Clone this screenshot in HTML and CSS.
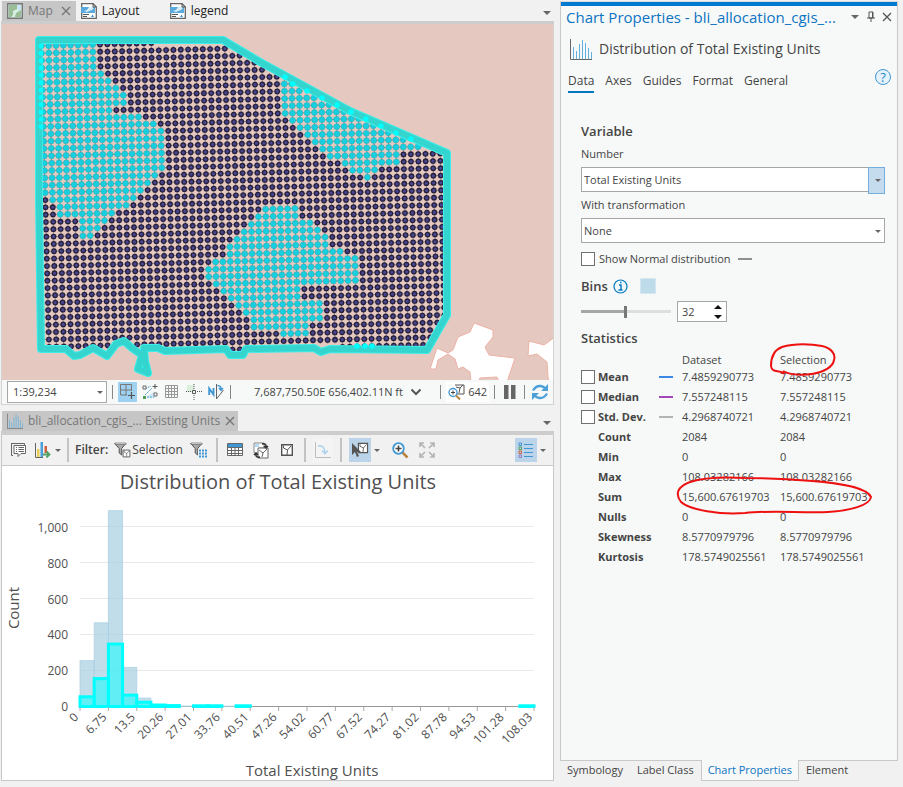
FILE: index.html
```html
<!DOCTYPE html>
<html lang="en">
<head>
<meta charset="utf-8">
<title>Chart Properties</title>
<link rel="stylesheet" href="styles.css">
</head>
<body>
<svg class="defs" width="0" height="0" aria-hidden="true">
  <defs>
    <symbol id="i-layout" viewBox="0 0 16 16"><path d="M.7.7H12l3.3 3.3v11.300H.7z" fill="#fff" stroke="#666" stroke-width="1.300"/><path d="M0 4h14v6H0z" fill="#5aa9dc"/><path d="M3 8l3-1 2-3 3 0 2 1-2 2-3 1-2 1z" fill="#d9edf8"/><path d="M12 .5v3.500h3.500M2 11.500h6M2 13.500h4" stroke="#555" fill="none"/><path d="M10 14l1.500-2.500L13 14z" fill="#3f97d3"/></symbol>
    <symbol id="i-hist" viewBox="0 0 22 22"><path d="M3.500 9v12M6.500 13v8M9.500 6v15M12.500 2v19M15.500 5v16M18.500 10v11M21.500 14v7" stroke="#62b0e0" fill="none"/><path d="M.5 1v20.500H22" stroke="#666" fill="none"/></symbol>
    <symbol id="i-funnel" viewBox="0 0 16 16"><path d="M.7 1.500h11l-4 5v6.500l-2.500-2V6.500z" fill="#aaa" stroke="#555"/><path d="M1 1h11v1.500H1z" fill="#eee" stroke="#555" stroke-width=".6"/></symbol>
    <symbol id="i-poly" viewBox="0 0 14 14"><path d="M1.700 1.700h10.600v10.600H1.700z" fill="#fff" stroke="#555" stroke-width="1.400"/><path d="M3.500 2.500v2.500l4 2 3.500-4M7.500 7l-.5 5" fill="none" stroke="#555"/></symbol>
  </defs>
</svg>
<main class="app">
  <div class="left">
    <section class="view map-view">
      <nav class="tabs" aria-label="Views">
        <button class="tab active"><svg width="16" height="16" viewBox="0 0 16 16"><path d="M.7.7h14.600v14.600H.7z" fill="#d7efe2" stroke="#777" stroke-width="1.400"/><path d="M2 2h8v4l-4 2v4l-2 2H2z" fill="#98bd97"/><path d="M10 2h4v4l-3 2z" fill="#c8e4f4"/><path d="M9 10l5-3v7H8z" fill="#98bd97"/></svg>Map<span class="close" aria-label="Close"><svg width="10" height="10" viewBox="0 0 10 10"><path d="M1 1l8 8M9 1L1 9" stroke="#777" stroke-width="1.400"/></svg></span></button>
        <button class="tab"><svg width="16" height="16"><use href="#i-layout"/></svg>Layout</button>
        <button class="tab second"><svg width="16" height="16"><use href="#i-layout"/></svg>legend</button>
        <button class="more" aria-label="More views"><i class="caret big"></i></button>
      </nav>
      <svg class="map" viewBox="2 24 551 356" preserveAspectRatio="xMinYMin slice" role="img" aria-label="Map of selected points">
        <g class="blank"><path d="M474 323L493 330V337L485 347L489 355L515 358L507 382H499L497 377L480 378L478 382H471L470 372L463 367L458 369L455 359L448 354L438 360L436 369H430L437 348L448 353L453 350L458 337L470 332Z"/><path d="M529 341L544 345L555 337V382H549L548 377L547 362L537 354L528 356Z"/></g>
        <g id="dots"></g>
        <g fill="none" stroke-linejoin="round"><path class="rim" d="M39 40H223L262 63 350 111 447 153V315L427 350 330 349 321 352 314 348 246 349 243 355H230L226 349 165 351 158 348H144L145 361 148 373 138 369 142 355 133 349 124 341 116 344 107 356 93 348 80 355 74 356 66 349 41 349 39 200Z"/><path class="core" d="M39 40H223L262 63 350 111 447 153V315L427 350 330 349 321 352 314 348 246 349 243 355H230L226 349 165 351 158 348H144L145 361 148 373 138 369 142 355 133 349 124 341 116 344 107 356 93 348 80 355 74 356 66 349 41 349 39 200Z"/></g>
        <g id="bright" fill="#0ff"></g>
      </svg>
      <div class="status">
        <div class="drop scale"><select aria-label="Map scale"><option>1:39,234</option></select></div>
        <i class="bar"></i>
        <button class="tool on" aria-label="Constrain"><svg width="16" height="16" viewBox="0 0 16 16"><path d="M11.500 7V.5H.5v10.500H7M6 .5v10.500M.5 6h11" fill="none" stroke="#777"/><path d="M11.500 8v7M8 11.500h7" stroke="#555" stroke-width="1.200"/></svg></button>
        <button class="tool" aria-label="Dynamic constraints"><svg width="16" height="16" viewBox="0 0 16 16"><path d="M5 12L13 7v7H5z" fill="#d3ebf7"/><path d="M3 5l6-3M3 11l7-7M5 13h7" stroke="#4c9fd0" stroke-dasharray="2 1"/><path d="M1 2h3v3H1zM12 9h3v3h-3z" fill="#fff" stroke="#666"/><path d="M13 0v5M10.500 2.500h5" stroke="#555"/><path d="M1 12h3v3H1z" fill="#4d9d5c"/></svg></button>
        <button class="tool" aria-label="Grid"><svg width="16" height="16" viewBox="0 0 16 16"><path d="M1.500 1.500h12v12h-12zM4.500 1.500v12M7.500 1.500v12M10.500 1.500v12M1.500 4.500h12M1.500 7.500h12M1.500 10.500h12" fill="none" stroke="#999"/></svg></button>
        <button class="tool" aria-label="Snapping"><svg width="16" height="16" viewBox="0 0 16 16"><path d="M1 1h7v7H1z" fill="#dcefdc"/><path d="M8 0v5M8 11v5M0 7.500h5M11 7.500h5" stroke="#555" stroke-dasharray="1 1"/><path d="M6.500 6.500h3v3h-3z" fill="none" stroke="#555"/></svg></button>
        <button class="tool" aria-label="Correct to north"><svg width="16" height="16" viewBox="0 0 16 16"><path d="M1.200 11V4.500L5.500 10.500V4" fill="none" stroke="#3f97d3" stroke-width="1.900"/><path d="M8.500 0v15M8.500 15l7-9" stroke="#666" fill="none"/><path d="M9.500 1.500q4 .5 3.500 4M11 4l2 2.500 2-2.500" stroke="#3f97d3" stroke-width="1.400" fill="none"/></svg></button>
        <i class="bar"></i>
        <span class="coords">7,687,750.50E 656,402.11N ft</span>
        <button class="tool unit" aria-label="Units"><svg width="12" height="8" viewBox="0 0 12 8"><path d="M1.500 1.500L6 6l4.500-4.500" fill="none" stroke="#555" stroke-width="2"/></svg></button>
        <i class="bar push"></i>
        <button class="sel"><svg width="17" height="16" viewBox="0 0 17 16"><path d="M7 1h9v9H8" fill="#fff" stroke="#555"/><path d="M8 3l4 1 3-3M12 4l-1 5" fill="none" stroke="#555"/><circle cx="5" cy="8.500" r="4" fill="#fff" stroke="#3f97d3" stroke-width="1.300"/><path d="M5 6.500v4M3 8.500h4" stroke="#444"/><path d="M8 11.500l4 4" stroke="#b9853f" stroke-width="2"/></svg>642</button>
        <i class="bar"></i>
        <button class="tool" aria-label="Pause"><svg width="12" height="14" viewBox="0 0 12 14"><path d="M0 0h4.500v14H0zM7 0h4.500v14H7z" fill="#666"/></svg></button>
        <i class="bar"></i>
        <button class="tool" aria-label="Refresh"><svg width="18" height="16" viewBox="0 0 18 16"><path d="M2 6.500Q5 1.500 9.500 2q3 .3 5 2.500M16 9.500Q13 14.500 8.500 14q-3-.3-5-2.500" fill="none" stroke="#4ba0da" stroke-width="2.400"/><path d="M17 0v7h-7zM1 16V9h7z" fill="#4ba0da"/></svg></button>
      </div>
    </section>

    <section class="view chart-view">
      <nav class="tabs" aria-label="Charts">
        <button class="tab active"><svg width="16" height="16"><use href="#i-hist"/></svg>bli_allocation_cgis_... Existing Units<span class="close" aria-label="Close"><svg width="10" height="10" viewBox="0 0 10 10"><path d="M1 1l8 8M9 1L1 9" stroke="#777" stroke-width="1.400"/></svg></span></button>
        <button class="more" aria-label="More charts"><i class="caret big"></i></button>
      </nav>
      <div class="toolbar">
        <button class="tool" aria-label="Properties"><svg width="16" height="16" viewBox="0 0 16 16"><path d="M.5 1v12.500H2M.5 1.500h13V3" fill="none" stroke="#666"/><path d="M3 3.500h11.500v8H10l-3 3v-3H3z" fill="#fff" stroke="#666"/><path d="M5 5.500h1M7.500 5.500H13M5 7.500h1M7.500 7.500H13M5 9.500h1M7.500 9.500H13" stroke="#666"/></svg></button>
        <button class="tool wide" aria-label="Export"><svg width="16" height="16" viewBox="0 0 16 16"><path d="M.5 1v14.500H8" fill="none" stroke="#666"/><path d="M2 7h2.500v8H2z" fill="#e8cf54"/><path d="M5.500 0H8v15H5.500z" fill="#4ba0da"/><path d="M9.500 4H12v7H9.500z" fill="#d1603d"/><path d="M8 12.500h6M11.500 9.500l3 3-3 3" stroke="#53a063" stroke-width="1.800" fill="none"/></svg><i class="caret"></i></button>
        <i class="sep"></i>
        <span class="filter">Filter:</span>
        <button class="tool text"><svg width="17" height="17" viewBox="0 0 17 17"><use href="#i-funnel" width="16" height="16"/><use href="#i-poly" x="8" y="7" width="9" height="9"/></svg>Selection</button>
        <button class="tool" aria-label="Filter by extent"><svg width="18" height="17" viewBox="0 0 18 17"><use href="#i-funnel" width="16" height="16"/><path d="M8 7h9v9H8z" fill="#f1f1f1"/><path d="M9 8.500h8M9 11.500h8M9 14.500h8" stroke="#3f97d3" stroke-width="2" stroke-dasharray="2 1"/></svg></button>
        <i class="sep"></i>
        <button class="tool" aria-label="Attribute table"><svg width="16" height="14" viewBox="0 0 16 14"><path d="M.5.5h15v12H.5z" fill="#fff" stroke="#666"/><path d="M1 1h14v3H1z" fill="#3f97d3"/><path d="M1 4.500h14M1 7.500h14M1 10.500h14M4.500 4v9M8 4v9M11.500 4v9" stroke="#666"/></svg></button>
        <button class="tool" aria-label="Switch selection"><svg width="16" height="17" viewBox="0 0 16 17"><path d="M1 1h10v5H6v5H1z" fill="#fff" stroke="#888"/><path d="M2 2h4v3H2z" fill="#b5daf0"/><path d="M5 6h10v10H5z" fill="#fff" stroke="#666"/><path d="M6 8l4 3 4-4M9 15l1-4" fill="none" stroke="#666"/><path d="M9 2q5-1 4 4M11 4l2 2 2-2M7 15q-5 1-4-4M1 13l2-2 2 2" stroke="#333" stroke-width="1.500" fill="none"/></svg></button>
        <button class="tool" aria-label="Clear selection"><svg width="14" height="14"><use href="#i-poly"/></svg></button>
        <i class="sep"></i>
        <button class="tool pale" aria-label="Rotate"><svg width="16" height="16" viewBox="0 0 16 16"><path d="M.5 0v15.500H16" fill="none" stroke="#bbb"/><path d="M3 4q7-1 7 7M7 8.500l3 3 3-3" fill="none" stroke="#add3ec" stroke-width="1.600"/></svg></button>
        <i class="sep"></i>
        <button class="tool on" aria-label="Select"><svg width="18" height="16" viewBox="0 0 18 16"><use href="#i-poly" x="6" y="0" width="12" height="12"/><path d="M1 1v12l3-3 2 5 2-1-2-4h4z" fill="#555"/></svg></button><i class="caret"></i>
        <button class="tool zoom" aria-label="Zoom"><svg width="17" height="17" viewBox="0 0 17 17"><path d="M10.500 10.500l5 5" stroke="#b9853f" stroke-width="2.500"/><circle cx="6.500" cy="6.500" r="5.300" fill="#fff" stroke="#3f97d3" stroke-width="1.800"/><path d="M6.500 3.500v6M3.500 6.500h6" stroke="#444" stroke-width="1.600"/></svg></button>
        <button class="tool" aria-label="Full extent"><svg width="16" height="16" viewBox="0 0 16 16"><path d="M1 5V1h4M11 1h4v4M15 11v4h-4M5 15H1v-4M1 1l5 5M15 1l-5 5M15 15l-5-5M1 15l5-5" fill="none" stroke="#b5b5b5" stroke-width="1.700"/></svg></button>
        <button class="tool on push" aria-label="Legend"><svg width="16" height="16" viewBox="0 0 16 16"><path d="M6 2.500h9M6 6.500h9M6 10.500h9M6 14.500h9" stroke="#3f97d3"/><path d="M1 1h2.500v2.500H1z" fill="none" stroke="#3f97d3"/><path d="M1 5h2.500v2.500H1z" fill="none" stroke="#53a063"/><path d="M1 9h2.500v2.500H1z" fill="none" stroke="#d1603d"/><path d="M1 13h2.500v2.500H1z" fill="none" stroke="#9480c4"/></svg></button><i class="caret"></i>
      </div>
      <svg class="chart" viewBox="2 466 551 314" role="img" aria-label="Histogram of Total Existing Units">
        <text x="278" y="489" class="ctitle">Distribution of Total Existing Units</text>
        <g class="grid"><path d="M80 526.500h454M80 562.500h454M80 598.500h454M80 634.500h454M80 670.500h454"/></g>
        <g class="ylab"><text x="68" y="532">1,000</text><text x="68" y="568">800</text><text x="68" y="604">600</text><text x="68" y="639">400</text><text x="68" y="675">200</text><text x="68" y="711">0</text></g>
        <path class="axis" d="M80 706.500h454"/>
        <g id="all" class="bars"></g>
        <g id="chosen" class="bars picked"></g>
        <g id="ticks" class="xlab"></g>
        <text x="312" y="776" class="cname">Total Existing Units</text>
        <text transform="translate(19 608) rotate(-90)" class="cname">Count</text>
      </svg>
    </section>
  </div>

  <aside class="right">
    <section class="pane">
      <header class="head"><h1>Chart Properties - bli_allocation_cgis_...</h1>
        <button class="tool" aria-label="Options"><i class="caret big"></i></button>
        <button class="tool" aria-label="Pin"><svg width="8" height="12" viewBox="0 0 8 12"><path d="M2 1h4v6H2zM0 7h8M4 7v4M5.500 1v6" fill="none" stroke="#555"/></svg></button>
        <button class="tool" aria-label="Close"><svg width="10" height="10" viewBox="0 0 10 10"><path d="M1 1l8 8M9 1L1 9" stroke="#555" stroke-width="1.300"/></svg></button>
      </header>
      <div class="subject"><svg width="22" height="22"><use href="#i-hist"/></svg><h2>Distribution of Total Existing Units</h2></div>
      <nav class="sections"><a href="#" class="current">Data</a><a href="#">Axes</a><a href="#">Guides</a><a href="#">Format</a><a href="#">General</a>
        <button class="help" aria-label="Help">?</button></nav>
      <form class="form">
        <h3>Variable</h3>
        <label for="num">Number</label>
        <div class="drop hot"><select id="num"><option>Total Existing Units</option></select></div>
        <label for="trans">With transformation</label>
        <div class="drop"><select id="trans"><option>None</option></select></div>
        <div class="check"><input type="checkbox" id="normal"><label for="normal">Show Normal distribution</label><i class="line gray"></i></div>
        <div class="bins"><h3>Bins</h3><svg width="15" height="15" viewBox="0 0 15 15"><circle cx="7.500" cy="7.500" r="6.500" fill="#f0f8fc" stroke="#0079c1" stroke-width="1.200"/><path d="M6 6h2v4.500M5.500 11h4M7 3.500h1.500" fill="none" stroke="#0079c1" stroke-width="1.400"/></svg><i class="swatch"></i></div>
        <div class="slide"><input type="range" min="1" max="64" value="32" aria-label="Number of bins"><div class="spin"><input type="number" value="32" aria-label="Bins"></div></div>
        <h3>Statistics</h3>
        <div class="stats">
          <table>
            <thead><tr><th></th><th></th><th></th><th>Dataset</th><th>Selection</th></tr></thead>
            <tbody>
              <tr><td><input type="checkbox" id="mean"></td><th><label for="mean">Mean</label></th><td><i class="line blue"></i></td><td>7.4859290773</td><td>7.4859290773</td></tr>
              <tr><td><input type="checkbox" id="median"></td><th><label for="median">Median</label></th><td><i class="line purple"></i></td><td>7.557248115</td><td>7.557248115</td></tr>
              <tr><td><input type="checkbox" id="std"></td><th><label for="std">Std. Dev.</label></th><td><i class="line"></i></td><td>4.2968740721</td><td>4.2968740721</td></tr>
              <tr><td></td><th>Count</th><td></td><td>2084</td><td>2084</td></tr>
              <tr><td></td><th>Min</th><td></td><td>0</td><td>0</td></tr>
              <tr><td></td><th>Max</th><td></td><td>108.03282166</td><td>108.03282166</td></tr>
              <tr><td></td><th>Sum</th><td></td><td>15,600.67619703</td><td>15,600.67619703</td></tr>
              <tr><td></td><th>Nulls</th><td></td><td>0</td><td>0</td></tr>
              <tr><td></td><th>Skewness</th><td></td><td>8.5770979796</td><td>8.5770979796</td></tr>
              <tr><td></td><th>Kurtosis</th><td></td><td>178.5749025561</td><td>178.5749025561</td></tr>
            </tbody>
          </table>
          <svg class="ink" width="304" height="230" viewBox="581 340 304 230" aria-hidden="true"><path d="M784 374C780 369 772 374 771 366C771 357 774 350 782 347C795 343 812 344 822 346C831 348 836 354 834 360C833 367 824 372 812 374C800 376 788 374 783 371M745 478C770 478 790 479 812 481C840 483 867 488 871 497C870 505 850 511 828 512C800 513 770 510 745 513C720 515 690 510 681 502C675 494 677 487 690 482C705 477 725 477 745 478"/></svg>
        </div>
      </form>
    </section>
    <nav class="bottom"><button>Symbology</button><button>Label Class</button><button class="current">Chart Properties</button><button>Element</button></nav>
  </aside>
</main>
<script src="draw.js"></script>
</body>
</html>
```
FILE: styles.css
```css
* { box-sizing: border-box; }
body { margin: 0; background: #f1f1f1; color: #444; font: 12px/20px "Open Sans", "Noto Sans", sans-serif; min-height: 100vh; }
button { border: 0; padding: 0; background: none; color: inherit; font: inherit; display: inline-flex; align-items: center; justify-content: center; }
h1, h2, h3 { margin: 0; font-weight: 400; }
svg { flex: none; }
.defs { position: absolute; }
.app { display: grid; grid-template-columns: minmax(0, 1fr) 338px; column-gap: 6px; padding: 1px 5px 6px 1px; min-height: 100vh; }
.left { display: flex; flex-direction: column; gap: 6px; }
.view { display: flex; flex-direction: column; border: 1px solid #c8c8c8; border-top: 0; }
.map-view { border-color: #d2d2d2; }

.tabs { display: flex; background: #f1f1f1; border-bottom: 3px solid #cdcdcd; height: 23px; margin: 0 -1px; padding-left: 1px; }
.chart-view .tabs { border-bottom-width: 4px; height: 24px; }
.tab { gap: 5px; padding: 0 5px; color: #222; font-size: 12px; }
.tab.active { background: #c6c6c6; color: #777; }
.second { margin-left: 20px; }
.close { display: flex; margin-left: 3px; }
.chart-view .tab { padding-right: 3px; }
.chart-view .close { margin-left: 0; }
.more { margin-left: auto; padding: 4px 3px 0; }
.caret { width: 0; height: 0; border: solid transparent; border-width: 3px 3px 0; border-top-color: #666; flex: none; }
.caret.big { border-width: 4px 4px 0; }

.map { display: block; width: 100%; background: #e5c8bf; }
.blank { fill: #fff; stroke: #eeb2a5; }
.rim { stroke: #3ceee9; stroke-width: 8px; }
.core { stroke: #34d5ce; stroke-width: 6px; }
.dot { fill: #494592; stroke: #25213c; stroke-width: 1.3px; }
.dot.hit { fill: #14d0e1; stroke: #2fb9c0; stroke-width: 0.8px; }
.mesh { stroke: #6c5b60; stroke-width: 1px; fill: none; opacity: .7; }

.status { display: flex; align-items: center; gap: 3px; height: 24px; padding: 0 4px 0 5px; background: #f7f9f8; }
.bar { width: 1px; height: 14px; background: #888; margin: 0 2px; }
.tool { min-width: 20px; height: 20px; }
.status .tool { min-width: 19px; }
.status .on { background: #9fd2f0; }
.coords { margin-left: 18px; font-size: 11px; white-space: nowrap; }
.unit { margin-left: 1px; }
.push { margin-left: auto; }
.sel { background: #fff; gap: 3px; padding: 0 2px; font-size: 11px; height: 20px; }

.drop { position: relative; }
.drop select { appearance: none; width: 100%; height: 25px; border: 1px solid #a6a6a6; border-radius: 0; background: #fff; color: #444; font: inherit; padding: 0 2px; display: block; }
.drop::after { content: ""; position: absolute; right: 4px; top: 50%; margin-top: -1px; border: solid transparent; border-width: 3px 3px 0; border-top-color: #666; pointer-events: none; }
.hot::before { content: ""; position: absolute; right: 0; top: 0; width: 15px; height: 100%; background: #c5dbee; border: 1px solid #74aede; pointer-events: none; }
.scale { width: 100px; font-size: 11px; }
.scale select { height: 22px; padding: 0 5px; }

.toolbar { display: flex; align-items: center; gap: 6px; height: 31px; padding: 0 7px; border-bottom: 1px solid #c8c8c8; }
.toolbar .tool { height: 24px; }
.toolbar .on { background: #bbd4e9; min-width: 22px; }
.toolbar .caret { margin-left: -3px; }
.wide { gap: 4px; }
.toolbar .wide .caret { margin-left: 0; }
.sep { width: 2px; height: 24px; background: #c3c3c3; }
.sep ~ .sep { margin: 0 1px; }
.filter { font-weight: 600; }
.text { gap: 1px; }
.pale { background: #f4f4f4; }
.zoom { margin-left: 5px; }

.chart { display: block; width: 100%; background: #fff; fill: #505050; }
.ctitle { font-size: 20px; text-anchor: middle; }
.cname { font-size: 15px; text-anchor: middle; }
.grid { stroke: #e9e9e9; }
.axis { stroke: #999; }
.ylab, .xlab { font-size: 12px; text-anchor: end; }
.xlab path { stroke: #aaa; }
.bars { fill: #a8cee1; fill-opacity: .7; stroke: #a8cee1; stroke-opacity: .7; }
.picked { fill: #0ff; fill-opacity: .5; stroke: #0ff; stroke-opacity: 1; stroke-width: 3px; }

.right { display: flex; flex-direction: column; }
.pane { flex: 1; background: #f7f9f8; border: 1px solid #c8c8c8; border-top-color: #ddd; }
.head { display: flex; align-items: center; height: 26px; border-top: 4px solid #0079d0; padding: 0 2px 0 5px; }
.head h1 { flex: 1; font-size: 15px; color: #0d74c4; white-space: nowrap; }
.head .tool { min-width: 16px; }
.subject { display: flex; align-items: center; gap: 7px; height: 38px; padding: 4px 9px 0; }
.subject h2 { font-size: 14px; white-space: nowrap; }
.sections { display: flex; align-items: center; gap: 11px; padding: 3px 6px 0 7px; height: 28px; }
.sections a { color: #444; text-decoration: none; line-height: 20px; border-bottom: 2px solid transparent; }
.sections .current { border-color: #0079c1; }
.help { margin-left: auto; align-self: flex-start; width: 16px; height: 16px; border: 1px solid #3f97d3; border-radius: 50%; background: #e3f2fb; color: #2587cb; font-size: 13px; }
.form { padding: 27px 12px 0 20px; font-size: 11px; }
.form h3 { font-size: 13px; font-weight: 600; }
.form > label { display: block; margin: 3px 0; }
.form input[type="checkbox"] { appearance: none; width: 14px; height: 14px; border: 1px solid #707070; background: #fff; margin: 0; display: block; flex: none; }
.check { display: flex; align-items: center; gap: 4px; margin: 6px 0 7px; }
.line { display: block; width: 14px; height: 2px; background: #b3b3b3; }
.gray { background: #8f8f8f; margin-left: 3px; }
.blue { background: #3f87e5; }
.purple { background: #a347b8; }
.bins { display: flex; align-items: center; gap: 5px; }
.swatch { width: 16px; height: 16px; margin-left: 7px; background: #bedbe9; border: 1px solid #d3e7f0; }
.slide { display: flex; align-items: center; gap: 6px; margin: 5px 0 6px; height: 21px; }
.slide input[type="range"] { appearance: none; width: 90px; height: 12px; margin: 0; background: linear-gradient(90deg, #a6a6a6 50%, #dedede 50%) center / 100% 3px no-repeat; }
.slide input::-webkit-slider-thumb { appearance: none; width: 3px; height: 12px; background: #777; }
.spin { position: relative; }
.spin input { appearance: textfield; width: 50px; height: 21px; border: 1px solid #a6a6a6; background: #fff; color: #444; font: inherit; padding: 0 4px; display: block; }
.spin input::-webkit-inner-spin-button { display: none; }
.spin::before, .spin::after { content: ""; position: absolute; right: 5px; border: solid transparent; }
.spin::before { top: 4px; border-width: 0 4px 4px; border-bottom-color: #111; }
.spin::after { bottom: 3px; border-width: 4px 4px 0; border-top-color: #111; }
.stats { position: relative; padding-top: 5px; }
.ink { position: absolute; left: 0; top: -8px; fill: none; stroke: #ee1111; stroke-width: 2px; pointer-events: none; }
table { border-collapse: collapse; table-layout: fixed; width: 292px; }
td, th { padding: 0; text-align: left; font-weight: 400; height: 20px; white-space: nowrap; line-height: 20px; }
thead th { line-height: 14px; height: 14px; }
thead th:nth-child(1) { width: 17px; }
thead th:nth-child(2) { width: 61px; }
thead th:nth-child(3) { width: 23px; }
thead th:nth-child(4) { width: 98px; }
tbody th { font-weight: 700; }
.bottom { display: flex; height: 21px; margin-top: -1px; font-size: 11px; }
.bottom button { padding: 0 6px; border: 1px solid transparent; border-top: 0; white-space: nowrap; }
.bottom .current { background: #f7f9f8; color: #0d74c4; border-color: #c8c8c8; }
```
FILE: draw.js
```javascript
const NS = "http://www.w3.org/2000/svg";
function add(parent, tag, attrs, text) {
  const el = document.createElementNS(NS, tag);
  for (const k in attrs) el.setAttribute(k, attrs[k]);
  if (text !== undefined) el.textContent = text;
  parent.appendChild(el);
  return el;
}
function inside(x, y, p) {
  let hit = false;
  for (let i = 0, j = p.length - 2; i < p.length; j = i, i += 2) {
    if ((p[i + 1] > y) !== (p[j + 1] > y) &&
        x < (p[j] - p[i]) * (y - p[i + 1]) / (p[j + 1] - p[i + 1]) + p[i]) hit = !hit;
  }
  return hit;
}

// Map: a slightly rotated lattice of points, clipped to the study area.
const area = [41,43, 222,43, 260,65, 348,114, 445,155, 445,314, 427,347, 246,347, 240,352, 232,352, 229,347, 150,347, 138,350, 124,340, 112,346, 98,347, 78,350, 71,350, 66,347, 41,347];
const zones = [
  [30,30, 97,30, 97,70, 104,72, 111,80, 120,86, 128,93, 128,106, 114,107, 114,113, 142,114, 142,120, 156,121, 158,128, 167,128, 167,171, 158,172, 158,178, 152,180, 146,190, 141,196, 136,202, 130,208, 115,212, 113,216, 106,223, 99,229, 94,239, 79,240, 79,218, 56,217, 56,204, 48,202, 48,196, 30,196],
  [282,76, 430,140, 416,150, 400,150, 400,165, 378,166, 378,172, 370,181, 363,181, 357,173, 344,166, 336,160, 320,153, 306,138, 290,123, 282,109],
  [267,203, 300,203, 300,219, 314,220, 322,228, 330,237, 330,247, 344,249, 352,255, 361,263, 360,277, 352,285, 302,285, 302,299, 316,300, 324,307, 324,322, 309,323, 309,330, 302,337, 279,337, 279,330, 251,329, 250,318, 235,304, 220,292, 205,276, 205,266, 226,253, 226,244, 240,233, 247,230, 255,214]
];
const dots = document.getElementById("dots");
const points = [];
let mesh = "";
for (let m = -24; m < 24; m++) {
  for (let n = -3; n < 60; n++) {
    const x = 45.3 + 7.33 * n + 0.19 * m;
    const y = 200 - 0.182 * n + 7.34 * m;
    if (!inside(x, y, area)) continue;
    points.push([x, y]);
    mesh += `M${x - 3.7} ${y}h7.4M${x} ${y - 3.7}v7.4`;
  }
}
add(dots, "path", { d: mesh, class: "mesh" });
for (const [x, y] of points) {
  const hit = zones.some(z => inside(x, y, z));
  add(dots, "circle", { cx: x.toFixed(1), cy: y.toFixed(1), r: hit ? 2.9 : 2.2, class: hit ? "dot hit" : "dot" });
}
const bright = document.getElementById("bright");
for (let y = 46; y < 132; y += 7.34) add(bright, "circle", { cx: 41, cy: y, r: 2.4 });
for (const [x, y] of [[285,77],[293,84],[307,91],[322,98],[337,105],[351,112],[366,119],[381,126],[396,133],[411,139],[357,346],[365,346],[372,346]]) {
  add(bright, "circle", { cx: x, cy: y, r: 2.7 });
}

// Histogram: 32 bins over 0 to 108.03.
const left = 80, base = 706.5, step = 454 / 32, unit = 0.18;
const all = [255, 465, 1088, 217, 47, 12, 8, 3, 4, 3, 2, 2];
const chosen = { 0: 54, 1: 155, 2: 347, 3: 63, 4: 24, 5: 8, 6: 5, 8: 4, 9: 4, 11: 4, 31: 4 };
all.forEach((v, i) => add(document.getElementById("all"), "rect", { x: left + i * step, y: base - v * unit, width: step, height: v * unit }));
for (const i in chosen) {
  add(document.getElementById("chosen"), "rect", { x: left + i * step, y: base - chosen[i] * unit, width: step, height: chosen[i] * unit });
}
const labels = ["0", "6.75", "13.5", "20.26", "27.01", "33.76", "40.51", "47.26", "54.02", "60.77", "67.52", "74.27", "81.02", "87.78", "94.53", "101.28", "108.03"];
labels.forEach((t, i) => {
  const x = left + i * step * 2, g = document.getElementById("ticks");
  add(g, "path", { d: `M${x} 707v4` });
  add(g, "text", { transform: `translate(${x - 1} 718) rotate(-45)` }, t);
});
```
